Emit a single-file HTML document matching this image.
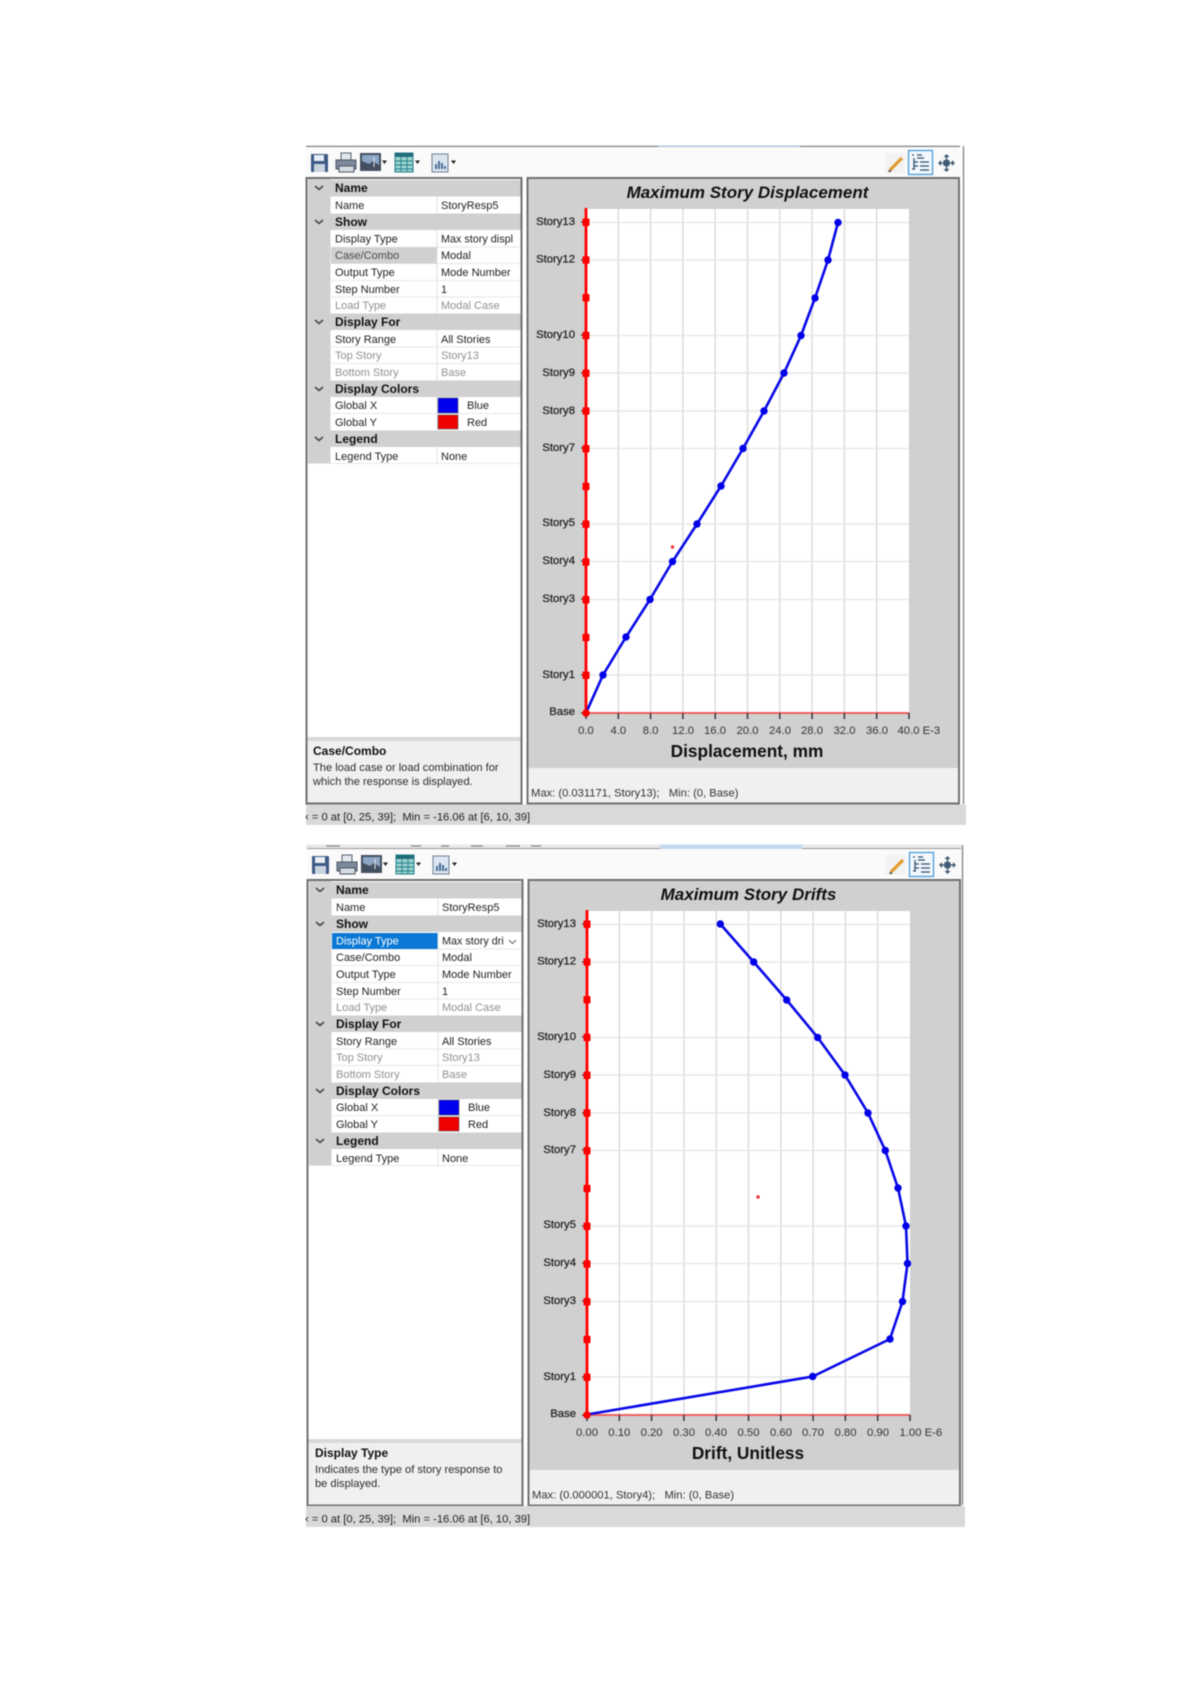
<!DOCTYPE html>
<html lang="en"><head><meta charset="utf-8"><title>Story response charts</title>
<style>
html,body{margin:0;padding:0;background:#fff;width:1200px;height:1696px;overflow:hidden}
svg{display:block;filter:blur(.55px)}
text{font-family:"Liberation Sans",sans-serif;font-size:11px;fill:#222;white-space:pre}
.h{font-weight:bold;font-size:12px;fill:#111}
.g{fill:#909090}
.w{fill:#fff}
.d{font-size:11.1px;fill:#2c2c2c}
.db{font-weight:bold;font-size:12px;fill:#111}
.st{font-size:11.2px;fill:#222}
.s{text-anchor:end;font-size:11.3px;fill:#222;stroke:#222;stroke-width:.25px}
.t{text-anchor:middle;font-size:11.3px;fill:#333}
.ti{font-size:17px;font-weight:bold;font-style:italic;text-anchor:middle;fill:#111}
.ax{font-size:17.300px;font-weight:bold;text-anchor:middle;fill:#111}
.m{font-size:11.2px;fill:#333}
</style></head>
<body>
<svg width="1200" height="1696" viewBox="0 0 1200 1696" xmlns="http://www.w3.org/2000/svg">
<defs>
<g id="chev"><path d="M-4 -2 L0 1.500 L4 -2" fill="none" stroke="#444" stroke-width="1.500"/></g>
<g id="tools">
  <rect x="306" y="147" width="654" height="30" fill="#fafafa"/>
  <rect x="311" y="154" width="17" height="18" fill="#3c5a85" rx="1"/><rect x="314" y="155" width="10" height="6" fill="#e8eef6"/><rect x="314" y="164" width="11" height="8" fill="#c9d3df"/>
  <rect x="341" y="153" width="10" height="8" fill="#e3e7ec" stroke="#55606f"/><rect x="336" y="160" width="20" height="9" fill="#7d8a9c" stroke="#4a5463"/><rect x="339" y="166" width="15" height="6" fill="#d6dbe2" stroke="#4a5463"/>
  <rect x="360" y="153" width="21" height="18" fill="#44505f"/><path d="M362 155h17v10l-6-4-4 3-7-3z" fill="#8ea6c6"/><path d="M374 157v10" stroke="#dfe5ec"/>
  <path d="M382 160.500h5l-2.500 3.500z" fill="#222"/>
  <rect x="395" y="153" width="18" height="19" fill="#9ed3cf" stroke="#1f7f8a"/><rect x="395" y="153" width="18" height="4" fill="#1f6d79"/><path d="M395 161h18M395 165h18M395 169h18M401 157v15M407 157v15" stroke="#1f7f8a" stroke-width=".9"/>
  <path d="M415 160.500h5l-2.500 3.500z" fill="#222"/>
  <rect x="432" y="154" width="16" height="18" fill="#dbe6f1" stroke="#6c7d92"/><path d="M436 169v-5M439 169v-8M442 169v-6M445 169v-3" stroke="#4a6c94" stroke-width="2"/>
  <path d="M451 160.500h5l-2.500 3.500z" fill="#222"/>
  <rect x="885" y="153" width="20" height="20" fill="#f3f3f3"/>
  <path d="M890 170 L902 158" stroke="#e09a2c" stroke-width="3.200"/><path d="M888.500 171.500l2.500-1" stroke="#555" stroke-width="2"/>
  <rect x="908.500" y="150.500" width="24" height="24" fill="#f2f8fd" stroke="#4a9bd9" stroke-width="1.300"/>
  <path d="M912 155h2M917 155h5M917 158h7M914 158v11M914 162h4M920 162h9M914 166h4M920 166h9M912 169h3M920 170h9" stroke="#33506e" stroke-width="1.300"/>
  <path d="M939 163h15M946.500 155.500v15" stroke="#3f5a75" stroke-width="1.600"/>
  <rect x="943.500" y="160" width="6" height="6" fill="#3f5a75"/>
  <path d="M946.500 154l-3 3h6zM946.500 172l-3-3h6zM938 163l3-3v6zM955 163l-3-3v6z" fill="#3f5a75"/>
</g>
<g id="rows">
  <rect x="307" y="178" width="214" height="559" fill="#fff"/>
  <rect x="308" y="179" width="22.500" height="284.500" fill="#d0d0d0"/>
  <path d="M330 247h191M330 263.500h191M330 280.500h191M330 297h191M330 347h191M330 363.500h191M330 413.500h191M330 463.500h191" stroke="#e8e8e8"/>
  <path d="M437 197v33M437 230v100M437 330v59M437 397v33M437 447v17" stroke="#e0e0e0"/>
  <rect x="308" y="180" width="213" height="16.500" fill="#d0d0d0"/>
  <rect x="308" y="213.500" width="213" height="16.500" fill="#d0d0d0"/>
  <rect x="308" y="313.500" width="213" height="16.500" fill="#d0d0d0"/>
  <rect x="308" y="380.500" width="213" height="16.500" fill="#d0d0d0"/>
  <rect x="308" y="430.500" width="213" height="16.500" fill="#d0d0d0"/>
  <use href="#chev" x="319" y="188"/><use href="#chev" x="319" y="222"/><use href="#chev" x="319" y="322"/><use href="#chev" x="319" y="389"/><use href="#chev" x="319" y="439"/>
  <rect x="438" y="398" width="20" height="15" fill="#0000f0" stroke="#555" stroke-width=".6"/>
  <rect x="438" y="415" width="20" height="14" fill="#f00000" stroke="#555" stroke-width=".6"/>
  <rect x="307" y="737" width="214" height="4" fill="#d8d8d8"/>
  <rect x="307" y="741" width="214" height="62" fill="#f0f0f0"/>
  <rect x="306.500" y="178" width="215" height="625.500" fill="none" stroke="#707070" stroke-width="2"/>
</g>
<g id="plotbg">
  <rect x="527.500" y="178" width="431.500" height="590" fill="#d0d0d0"/>
  <rect x="527.500" y="768" width="431.500" height="35.500" fill="#f0f0f0"/>
  <rect x="527.500" y="178" width="431.500" height="625.500" fill="none" stroke="#707070" stroke-width="2"/>
  <rect x="586" y="209" width="323" height="504" fill="#fff"/>
  <path d="M618.300 209v504M650.600 209v504M682.900 209v504M715.200 209v504M747.500 209v504M779.800 209v504M812.100 209v504M844.400 209v504M876.700 209v504" stroke="#dcdcdc" stroke-width="1.500"/>
  <path d="M586 222.500h323M586 260h323M586 335.500h323M586 373h323M586 411h323M586 448.500h323M586 524h323M586 561.500h323M586 599.500h323M586 675h323" stroke="#e4e4e4" stroke-width="1.300"/>
  <path d="M586 713h323" stroke="#ef6060" stroke-width="2"/>
  <path d="M586 713v6M618.300 713v6M650.600 713v6M682.900 713v6M715.200 713v6M747.500 713v6M779.800 713v6M812.100 713v6M844.400 713v6M876.700 713v6M909 713v6" stroke="#333" stroke-width="1.500"/>
  <path d="M586 208v505" stroke="#f00" stroke-width="2.800"/>
  <path d="M581 222h4M581 260h4M581 335h4M581 373h4M581 411h4M581 448h4M581 524h4M581 561h4M581 599h4M581 675h4M581 713h4" stroke="#333" stroke-width="1.200"/>
  <g fill="#f00">
    <rect x="582.500" y="218.500" width="7" height="7.500" rx="1"/><rect x="582.500" y="256.200" width="7" height="7.500" rx="1"/><rect x="582.500" y="294" width="7" height="7.500" rx="1"/><rect x="582.500" y="331.800" width="7" height="7.500" rx="1"/><rect x="582.500" y="369.500" width="7" height="7.500" rx="1"/><rect x="582.500" y="407.300" width="7" height="7.500" rx="1"/><rect x="582.500" y="445" width="7" height="7.500" rx="1"/><rect x="582.500" y="482.800" width="7" height="7.500" rx="1"/><rect x="582.500" y="520.500" width="7" height="7.500" rx="1"/><rect x="582.500" y="558.300" width="7" height="7.500" rx="1"/><rect x="582.500" y="596" width="7" height="7.500" rx="1"/><rect x="582.500" y="633.800" width="7" height="7.500" rx="1"/><rect x="582.500" y="671.500" width="7" height="7.500" rx="1"/>
  </g>
</g>
</defs>

<!-- TOP WINDOW -->
<path d="M306 146.500H960" stroke="#808080" stroke-width="1.400"/>
<path d="M658 146.500H800" stroke="#a9c6e6" stroke-width="1.500"/>
<path d="M963.500 146V804" stroke="#808080" stroke-width="1.300"/>
<use href="#tools"/>
<use href="#rows"/>
<use href="#plotbg"/>

<text class="h" x="335" y="192">Name</text>
<text x="335" y="209">Name</text><text x="441" y="209">StoryResp5</text>
<text class="h" x="335" y="226">Show</text>
<text x="335" y="242.500">Display Type</text><text x="441" y="242.500" style="font-size:10.800px">Max story displ</text>
<rect x="331" y="247.500" width="105.500" height="16" fill="#d0d0d0"/>
<text x="335" y="259" style="fill:#4a4a4a">Case/Combo</text><text x="441" y="259">Modal</text>
<text x="335" y="276">Output Type</text><text x="441" y="276">Mode Number</text>
<text x="335" y="293">Step Number</text><text x="441" y="293">1</text>
<text class="g" x="335" y="309">Load Type</text><text class="g" x="441" y="309">Modal Case</text>
<text class="h" x="335" y="326">Display For</text>
<text x="335" y="343">Story Range</text><text x="441" y="343">All Stories</text>
<text class="g" x="335" y="359">Top Story</text><text class="g" x="441" y="359">Story13</text>
<text class="g" x="335" y="376">Bottom Story</text><text class="g" x="441" y="376">Base</text>
<text class="h" x="335" y="393">Display Colors</text>
<text x="335" y="409">Global X</text><text x="467" y="409">Blue</text>
<text x="335" y="426">Global Y</text><text x="467" y="426">Red</text>
<text class="h" x="335" y="443">Legend</text>
<text x="335" y="460">Legend Type</text><text x="441" y="460">None</text>
<text class="db" x="313" y="755">Case/Combo</text>
<text class="d" x="313" y="771">The load case or load combination for</text>
<text class="d" x="313" y="785">which the response is displayed.</text>

<text class="ti" x="747.500" y="198">Maximum Story Displacement</text>
<text class="s" x="575" y="225">Story13</text><text class="s" x="575" y="262.500">Story12</text><text class="s" x="575" y="338">Story10</text><text class="s" x="575" y="376">Story9</text><text class="s" x="575" y="414">Story8</text><text class="s" x="575" y="451">Story7</text><text class="s" x="575" y="526">Story5</text><text class="s" x="575" y="564">Story4</text><text class="s" x="575" y="602">Story3</text><text class="s" x="575" y="678">Story1</text><text class="s" x="575" y="715">Base</text>
<text class="t" x="586" y="734">0.0</text><text class="t" x="618.300" y="734">4.0</text><text class="t" x="650.600" y="734">8.0</text><text class="t" x="683" y="734">12.0</text><text class="t" x="715" y="734">16.0</text><text class="t" x="747.500" y="734">20.0</text><text class="t" x="780" y="734">24.0</text><text class="t" x="812" y="734">28.0</text><text class="t" x="844.500" y="734">32.0</text><text class="t" x="877" y="734">36.0</text><text x="897.500" y="734" style="font-size:11.300px;fill:#333">40.0 E-3</text>
<text class="ax" x="747" y="757">Displacement, mm</text>
<text class="m" x="531" y="796.500" xml:space="preserve">Max: (0.031171, Story13);   Min: (0, Base)</text>
<polyline points="586,713 603,675 626,637 650,599.500 672.500,561.500 697,524 721,486 743,448.500 764,411 784,373 801,335.500 815,298 828,260 838,222.500" fill="none" stroke="#0808e8" stroke-width="2.600"/>
<g fill="#0000e8"><circle cx="603" cy="675" r="3.700"/><circle cx="626" cy="637" r="3.700"/><circle cx="650" cy="599.500" r="3.700"/><circle cx="672.500" cy="561.500" r="3.700"/><circle cx="697" cy="524" r="3.700"/><circle cx="721" cy="486" r="3.700"/><circle cx="743" cy="448.500" r="3.700"/><circle cx="764" cy="411" r="3.700"/><circle cx="784" cy="373" r="3.700"/><circle cx="801" cy="335.500" r="3.700"/><circle cx="815" cy="298" r="3.700"/><circle cx="828" cy="260" r="3.700"/><circle cx="838" cy="222.500" r="3.700"/></g>
<circle cx="586" cy="713" r="3.800" fill="#f00"/>
<circle cx="672.500" cy="547" r="1.700" fill="#f03030"/>

<rect x="306" y="804.500" width="660" height="20.500" fill="#d9d9d9"/>
<text class="st" x="305" y="820.500" xml:space="preserve">‹ = 0 at [0, 25, 39];  Min = -16.06 at [6, 10, 39]</text>

<!-- BOTTOM WINDOW -->
<g transform="translate(1,702)">
<rect x="305" y="142.500" width="655" height="4" fill="#e8e8e8"/>
<path d="M325 144h14M410 144h10M440 144h8M470 144h12M505 144h14M530 144h10M675 144h14M712 144h8" stroke="#888" stroke-width="1.200"/>
<path d="M306 147H960" stroke="#808080" stroke-width="1.400"/>
<rect x="659" y="142.500" width="142" height="4.500" fill="#c3d8ef"/>
<path d="M961.500 143V803" stroke="#808080" stroke-width="1.300"/>
<use href="#tools"/>
<use href="#rows"/>
<use href="#plotbg"/>
<text class="h" x="335" y="192">Name</text>
<text x="335" y="209">Name</text><text x="441" y="209">StoryResp5</text>
<text class="h" x="335" y="226">Show</text>
<rect x="331" y="231" width="105.500" height="16" fill="#0a78d4"/>
<text class="w" x="335" y="242.500">Display Type</text><text x="441" y="242.500" style="font-size:10.800px">Max story dri</text>
<path d="M508 238l3.500 3.500 3.500-3.500" fill="none" stroke="#666"/>
<text x="335" y="259">Case/Combo</text><text x="441" y="259">Modal</text>
<text x="335" y="276">Output Type</text><text x="441" y="276">Mode Number</text>
<text x="335" y="293">Step Number</text><text x="441" y="293">1</text>
<text class="g" x="335" y="309">Load Type</text><text class="g" x="441" y="309">Modal Case</text>
<text class="h" x="335" y="326">Display For</text>
<text x="335" y="343">Story Range</text><text x="441" y="343">All Stories</text>
<text class="g" x="335" y="359">Top Story</text><text class="g" x="441" y="359">Story13</text>
<text class="g" x="335" y="376">Bottom Story</text><text class="g" x="441" y="376">Base</text>
<text class="h" x="335" y="393">Display Colors</text>
<text x="335" y="409">Global X</text><text x="467" y="409">Blue</text>
<text x="335" y="426">Global Y</text><text x="467" y="426">Red</text>
<text class="h" x="335" y="443">Legend</text>
<text x="335" y="460">Legend Type</text><text x="441" y="460">None</text>
<text class="db" x="314" y="755">Display Type</text>
<text class="d" x="314" y="771">Indicates the type of story response to</text>
<text class="d" x="314" y="785">be displayed.</text>

<text class="ti" x="747.500" y="198">Maximum Story Drifts</text>
<text class="s" x="575" y="225">Story13</text><text class="s" x="575" y="262.500">Story12</text><text class="s" x="575" y="338">Story10</text><text class="s" x="575" y="376">Story9</text><text class="s" x="575" y="414">Story8</text><text class="s" x="575" y="451">Story7</text><text class="s" x="575" y="526">Story5</text><text class="s" x="575" y="564">Story4</text><text class="s" x="575" y="602">Story3</text><text class="s" x="575" y="678">Story1</text><text class="s" x="575" y="715">Base</text>
<text class="t" x="586" y="734">0.00</text><text class="t" x="618.300" y="734">0.10</text><text class="t" x="650.600" y="734">0.20</text><text class="t" x="683" y="734">0.30</text><text class="t" x="715" y="734">0.40</text><text class="t" x="747.500" y="734">0.50</text><text class="t" x="780" y="734">0.60</text><text class="t" x="812" y="734">0.70</text><text class="t" x="844.500" y="734">0.80</text><text class="t" x="877" y="734">0.90</text><text x="898.500" y="734" style="font-size:11.300px;fill:#333">1.00 E-6</text>
<text class="ax" x="747" y="757">Drift, Unitless</text>
<text class="m" x="531" y="796.500" xml:space="preserve">Max: (0.000001, Story4);   Min: (0, Base)</text>
<polyline points="586,712.500 811.700,674.500 889,637 901.500,599.500 906.500,561.500 905,524 897,486 884.300,448.500 867,411 844,373 816.700,335.500 785.700,298 752.700,260 719.300,222" fill="none" stroke="#0808e8" stroke-width="2.600"/>
<g fill="#0000e8"><circle cx="811.700" cy="674.500" r="3.700"/><circle cx="889" cy="637" r="3.700"/><circle cx="901.500" cy="599.500" r="3.700"/><circle cx="906.500" cy="561.500" r="3.700"/><circle cx="905" cy="524" r="3.700"/><circle cx="897" cy="486" r="3.700"/><circle cx="884.300" cy="448.500" r="3.700"/><circle cx="867" cy="411" r="3.700"/><circle cx="844" cy="373" r="3.700"/><circle cx="816.700" cy="335.500" r="3.700"/><circle cx="785.700" cy="298" r="3.700"/><circle cx="752.700" cy="260" r="3.700"/><circle cx="719.300" cy="222" r="3.700"/></g>
<circle cx="586" cy="713" r="3.800" fill="#f00"/>
<circle cx="757" cy="495" r="1.700" fill="#f03030"/>
<rect x="305" y="804" width="659" height="21" fill="#d9d9d9"/>
<text class="st" x="304" y="820.500" xml:space="preserve">‹ = 0 at [0, 25, 39];  Min = -16.06 at [6, 10, 39]</text>
</g>
</svg>
</body></html>
